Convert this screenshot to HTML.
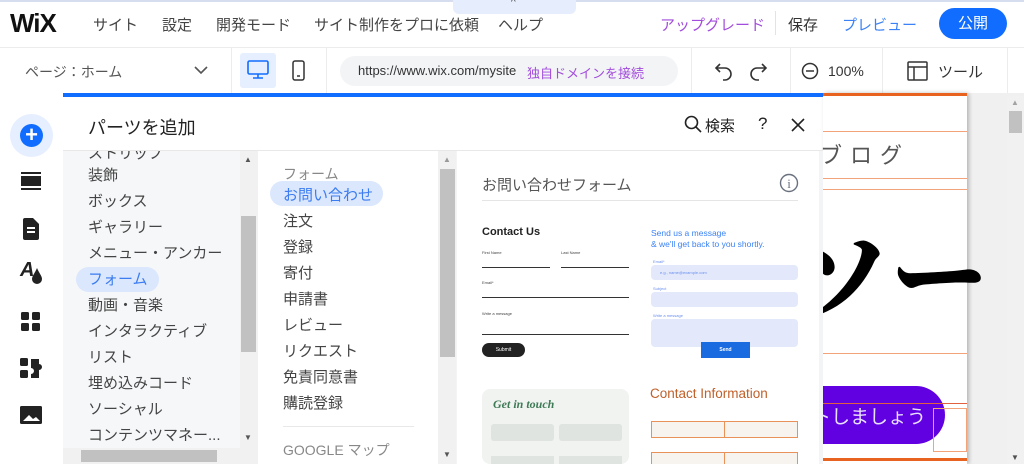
<!DOCTYPE html>
<html><head><meta charset="utf-8"><style>
*{box-sizing:border-box;margin:0;padding:0}
body{width:1024px;height:464px;overflow:hidden;position:relative;background:#fff;font-family:"Liberation Sans","Noto Sans CJK JP",sans-serif;color:#333}
.a{position:absolute}
.t{white-space:nowrap}
</style></head><body>
<!-- top bar -->
<div class="a" style="left:0;top:0;width:1024px;height:2px;background:#d6ddef"></div>
<div class="a" style="left:453px;top:0;width:123px;height:14px;background:#e6edfc;border-radius:0 0 6px 6px"></div>
<div class="a t" style="left:511px;top:-3px;font-size:10px;color:#333">^</div>
<div class="a t" style="left:10px;top:8px;font-size:26px;font-weight:900;color:#111;letter-spacing:-1px">WiX</div>
<div class="a t" style="left:93px;top:14px;font-size:15px;color:#444">サイト</div>
<div class="a t" style="left:162px;top:14px;font-size:15px;color:#444">設定</div>
<div class="a t" style="left:216px;top:14px;font-size:15px;color:#444">開発モード</div>
<div class="a t" style="left:314px;top:14px;font-size:15px;color:#444">サイト制作をプロに依頼</div>
<div class="a t" style="left:498px;top:14px;font-size:15px;color:#444">ヘルプ</div>
<div class="a t" style="left:660px;top:14px;font-size:15px;color:#a24ddb">アップグレード</div>
<div class="a" style="left:775px;top:11px;width:1px;height:24px;background:#e3e3e3"></div>
<div class="a t" style="left:788px;top:14px;font-size:15px;color:#333">保存</div>
<div class="a t" style="left:842px;top:14px;font-size:15px;color:#3b82f6">プレビュー</div>
<div class="a" style="left:939px;top:8px;width:68px;height:31px;background:#116dff;border-radius:16px;color:#fff;font-size:15px;text-align:center;line-height:31px">公開</div>
<div class="a" style="left:0;top:47px;width:1024px;height:1px;background:#ececec"></div>
<!-- second bar -->
<div class="a t" style="left:25px;top:62px;font-size:14px;color:#555">ページ：ホーム</div>
<svg class="a" style="left:194px;top:65px" width="14" height="10"><path d="M1 2l6 6 6-6" stroke="#555" stroke-width="1.6" fill="none"/></svg>
<div class="a" style="left:231px;top:48px;width:1px;height:45px;background:#ececec"></div>
<div class="a" style="left:240px;top:53px;width:36px;height:35px;background:#e6efff;border-radius:3px"></div>
<svg class="a" style="left:246px;top:60px" width="24" height="20"><rect x="2" y="1" width="20" height="13" rx="1.5" stroke="#116dff" stroke-width="1.6" fill="none"/><path d="M12 14v4M7 18h10" stroke="#116dff" stroke-width="1.6"/></svg>
<svg class="a" style="left:292px;top:60px" width="14" height="22"><rect x="1" y="1" width="11" height="19" rx="2" stroke="#333" stroke-width="1.5" fill="none"/><path d="M5 16h3" stroke="#333" stroke-width="1.5"/></svg>
<div class="a" style="left:326px;top:48px;width:1px;height:45px;background:#ececec"></div>
<div class="a" style="left:340px;top:56px;width:338px;height:30px;background:#f3f4f6;border-radius:15px"></div>
<div class="a t" style="left:358px;top:63px;font-size:13px;color:#333">https://www.wix.com/mysite</div>
<div class="a t" style="left:527px;top:63px;font-size:13px;color:#a24ddb">独自ドメインを接続</div>
<div class="a" style="left:691px;top:48px;width:1px;height:45px;background:#ececec"></div>
<svg class="a" style="left:714px;top:61px" width="20" height="20"><path d="M6 3L2 7l4 4M2 7h9a6 6 0 0 1 0 12H9" stroke="#333" stroke-width="1.6" fill="none"/></svg>
<svg class="a" style="left:748px;top:61px" width="20" height="20"><path d="M14 3l4 4-4 4M18 7H9a6 6 0 0 0 0 12h2" stroke="#333" stroke-width="1.6" fill="none"/></svg>
<div class="a" style="left:790px;top:48px;width:1px;height:45px;background:#ececec"></div>
<svg class="a" style="left:801px;top:62px" width="18" height="18"><circle cx="9" cy="9" r="7.5" stroke="#333" stroke-width="1.5" fill="none"/><path d="M5 9h8" stroke="#333" stroke-width="1.5"/></svg>
<div class="a t" style="left:828px;top:63px;font-size:14px;color:#333">100%</div>
<div class="a" style="left:882px;top:48px;width:1px;height:45px;background:#ececec"></div>
<svg class="a" style="left:907px;top:61px" width="22" height="20"><rect x="1" y="1" width="19" height="18" rx="1" stroke="#333" stroke-width="1.5" fill="none"/><path d="M1 6h19M7 6v13" stroke="#333" stroke-width="1.5"/></svg>
<div class="a t" style="left:938px;top:61px;font-size:15px;color:#333">ツール</div>
<div class="a" style="left:1007px;top:48px;width:1px;height:45px;background:#ececec"></div>
<!-- right gray & canvas -->
<div class="a" style="left:823px;top:93px;width:201px;height:371px;background:#f0f0f0"></div>
<div class="a" style="left:823px;top:93px;width:144px;height:371px;background:#fff;box-shadow:2px 0 4px rgba(0,0,0,.25)"></div>
<div class="a" style="left:823px;top:93px;width:144px;height:3px;background:#e86320"></div>
<div class="a" style="left:823px;top:131px;width:144px;height:1px;background:#f3a37a"></div>
<div class="a t" style="left:820px;top:138px;font-size:22px;color:#555;letter-spacing:8px">ブログ</div>
<div class="a" style="left:823px;top:178px;width:144px;height:1px;background:#f3a37a"></div>
<div class="a" style="left:823px;top:189px;width:144px;height:1px;background:#f3a37a"></div>
<div class="a t" style="left:795px;top:225px;font-size:96px;color:#000;font-family:'Noto Serif CJK SC',serif;font-weight:900;line-height:1">ソー</div>
<div class="a" style="left:823px;top:353px;width:144px;height:1px;background:#f3a37a"></div>
<div class="a" style="left:790px;top:386px;width:155px;height:58px;background:#6100e0;border-radius:0 29px 29px 0"></div>
<div class="a" style="left:790px;top:403px;width:177px;height:1px;background:#e06040"></div>
<div class="a t" style="left:812px;top:402px;font-size:19px;color:#e8e0ff">トしましょう</div>
<div class="a" style="left:933px;top:408px;width:34px;height:44px;border:1px solid #f3a37a"></div>
<div class="a" style="left:823px;top:458px;width:144px;height:3px;background:#e86320"></div>
<div class="a" style="left:1007px;top:96px;width:17px;height:368px;background:#f1f1f1"></div>
<div class="a" style="left:1009px;top:111px;width:13px;height:22px;background:#c1c1c1"></div>
<div class="a t" style="left:1011px;top:98px;font-size:8px;color:#a3a3a3">▲</div>
<div class="a t" style="left:1011px;top:453px;font-size:8px;color:#505050">▼</div>
<!-- left sidebar -->
<div class="a" style="left:0;top:93px;width:63px;height:371px;background:#fff"></div>
<div class="a" style="left:10px;top:114px;width:43px;height:43px;border-radius:50%;background:#e6efff"></div>
<div class="a" style="left:20px;top:124px;width:23px;height:23px;border-radius:50%;background:#116dff;color:#fff;font-size:22px;line-height:22px;text-align:center;font-weight:bold">+</div>
<svg class="a" style="left:20px;top:172px" width="22" height="18"><rect x="1" y="0" width="20" height="2" fill="#222"/><rect x="1" y="4" width="20" height="10" fill="#222"/><rect x="1" y="16" width="20" height="2" fill="#222"/></svg>
<svg class="a" style="left:22px;top:218px" width="18" height="22"><path d="M1 2a2 2 0 0 1 2-2h8l6 6v14a2 2 0 0 1-2 2H3a2 2 0 0 1-2-2z" fill="#222"/><path d="M5 10h8M5 14h8" stroke="#fff" stroke-width="2"/></svg>
<div class="a t" style="left:20px;top:259px;font-size:20px;font-weight:900;color:#222;font-style:italic">A</div>
<svg class="a" style="left:31px;top:268px" width="12" height="16"><path d="M6 0C4 5 1 8 1 11a5 5 0 0 0 10 0C11 8 8 5 6 0z" fill="#222"/></svg>
<svg class="a" style="left:21px;top:312px" width="20" height="20"><rect x="0" y="0" width="8" height="8" rx="1.5" fill="#222"/><rect x="11" y="0" width="8" height="8" rx="1.5" fill="#222"/><rect x="0" y="11" width="8" height="8" rx="1.5" fill="#222"/><rect x="11" y="11" width="8" height="8" rx="1.5" fill="#222"/></svg>
<svg class="a" style="left:20px;top:358px" width="24" height="22"><rect x="0" y="0" width="8" height="8" rx="1.5" fill="#222"/><rect x="0" y="12" width="8" height="8" rx="1.5" fill="#222"/><path d="M11 1h8v5a3 3 0 1 1 0 6v8h-8v-4a3 3 0 1 0 0-6z" fill="#222"/></svg>
<svg class="a" style="left:20px;top:406px" width="22" height="18"><rect x="0" y="0" width="22" height="18" rx="1.5" fill="#222"/><path d="M3 15l6-6 4 4 3-2 4 4z" fill="#fff"/></svg>
<!-- panel -->
<div class="a" style="left:63px;top:93px;width:760px;height:4px;background:#116dff"></div>
<div class="a t" style="left:88px;top:114px;font-size:18px;color:#222">パーツを追加</div>
<svg class="a" style="left:684px;top:115px" width="18" height="18"><circle cx="7.5" cy="7.5" r="6" stroke="#222" stroke-width="1.6" fill="none"/><path d="M12 12l5 5" stroke="#222" stroke-width="1.6"/></svg>
<div class="a t" style="left:705px;top:115px;font-size:15px;color:#222">検索</div>
<div class="a t" style="left:758px;top:114px;font-size:17px;color:#222">?</div>
<svg class="a" style="left:791px;top:118px" width="14" height="14"><path d="M1 1l12 12M13 1L1 13" stroke="#222" stroke-width="1.6"/></svg>
<div class="a" style="left:63px;top:150px;width:760px;height:1px;background:#e8e8e8"></div>
<!-- left column -->
<div class="a" style="left:63px;top:151px;width:195px;height:313px;background:#f6f7f9;overflow:hidden">
 <div class="a t" style="left:25px;top:-9px;font-size:15px;color:#444">ストリップ</div>
</div>
<div class="a" style="left:76px;top:267px;width:83px;height:25px;border-radius:13px;background:#dbe7fd"></div>
<div class="a" style="left:88px;top:163px;font-size:15px;color:#444;line-height:26px">装飾<br>ボックス<br>ギャラリー<br>メニュー・アンカー<br><span style="color:#3b7cf0">フォーム</span><br>動画・音楽<br>インタラクティブ<br>リスト<br>埋め込みコード<br>ソーシャル<br>コンテンツマネー...</div>
<div class="a" style="left:240px;top:151px;width:18px;height:300px;background:#f1f1f1"></div>
<div class="a" style="left:241px;top:216px;width:15px;height:136px;background:#c1c1c1"></div>
<div class="a t" style="left:244px;top:155px;font-size:8px;color:#555">▲</div>
<div class="a t" style="left:244px;top:433px;font-size:8px;color:#555">▼</div>
<div class="a" style="left:63px;top:448px;width:195px;height:16px;background:#f1f1f1"></div>
<div class="a" style="left:81px;top:450px;width:136px;height:12px;background:#c1c1c1"></div>
<!-- middle column -->
<div class="a" style="left:258px;top:151px;width:198px;height:313px;background:#fff"></div>
<div class="a t" style="left:283px;top:164px;font-size:14px;color:#888">フォーム</div>
<div class="a" style="left:270px;top:181px;width:113px;height:25px;border-radius:13px;background:#dbe7fd"></div>
<div class="a" style="left:283px;top:183px;font-size:15px;color:#444;line-height:26px"><span style="color:#3b7cf0">お問い合わせ</span><br>注文<br>登録<br>寄付<br>申請書<br>レビュー<br>リクエスト<br>免責同意書<br>購読登録</div>
<div class="a" style="left:283px;top:426px;width:131px;height:1px;background:#e8e8e8"></div>
<div class="a t" style="left:283px;top:440px;font-size:14px;color:#888">GOOGLE マップ</div>
<div class="a" style="left:438px;top:151px;width:18px;height:313px;background:#f1f1f1"></div>
<div class="a" style="left:440px;top:169px;width:15px;height:188px;background:#c1c1c1"></div>
<div class="a t" style="left:443px;top:155px;font-size:8px;color:#999">▲</div>
<div class="a t" style="left:443px;top:450px;font-size:8px;color:#555">▼</div>
<!-- right preview -->
<div class="a" style="left:456px;top:151px;width:367px;height:313px;background:#f3f4f6"></div>
<div class="a" style="left:457px;top:151px;width:362px;height:313px;background:#fff"></div>
<div class="a t" style="left:482px;top:174px;font-size:15px;color:#555">お問い合わせフォーム</div>
<svg class="a" style="left:779px;top:173px" width="20" height="20"><circle cx="10" cy="10" r="8.5" stroke="#6a7280" stroke-width="1.4" fill="none"/><text x="10" y="15" font-size="13" text-anchor="middle" fill="#6a7280" font-family="Liberation Serif">i</text></svg>
<div class="a" style="left:482px;top:200px;width:316px;height:1px;background:#e5e5e5"></div>
<div class="a t" style="left:482px;top:226px;font-size:11px;font-weight:bold;color:#222">Contact Us</div>
<div class="a t" style="left:482px;top:250px;font-size:4px;color:#444">First Name</div>
<div class="a t" style="left:561px;top:250px;font-size:4px;color:#444">Last Name</div>
<div class="a" style="left:482px;top:267px;width:68px;height:1px;background:#333"></div>
<div class="a" style="left:561px;top:267px;width:68px;height:1px;background:#333"></div>
<div class="a t" style="left:482px;top:280px;font-size:4px;color:#444">Email*</div>
<div class="a" style="left:482px;top:297px;width:147px;height:1px;background:#333"></div>
<div class="a t" style="left:482px;top:311px;font-size:4px;color:#444">Write a message</div>
<div class="a" style="left:482px;top:334px;width:147px;height:1px;background:#333"></div>
<div class="a" style="left:482px;top:343px;width:43px;height:14px;border-radius:7px;background:#222;color:#fff;font-size:5px;text-align:center;line-height:14px">Submit</div>
<div class="a" style="left:651px;top:228px;font-size:8.5px;color:#3b82f6;line-height:11px">Send us a message<br>&amp; we'll get back to you shortly.</div>
<div class="a t" style="left:653px;top:259px;font-size:4px;color:#6b8ff0">Email*</div>
<div class="a" style="left:651px;top:265px;width:147px;height:15px;border-radius:4px;background:#e3e9fb"></div>
<div class="a t" style="left:660px;top:270px;font-size:4px;color:#6b8ff0">e.g., name@example.com</div>
<div class="a t" style="left:653px;top:286px;font-size:4px;color:#6b8ff0">Subject</div>
<div class="a" style="left:651px;top:292px;width:147px;height:15px;border-radius:4px;background:#e3e9fb"></div>
<div class="a t" style="left:653px;top:313px;font-size:4px;color:#6b8ff0">Write a message</div>
<div class="a" style="left:651px;top:319px;width:147px;height:28px;border-radius:4px;background:#e3e9fb"></div>
<div class="a" style="left:701px;top:342px;width:49px;height:16px;background:#1a6ae0;color:#fff;font-size:5px;text-align:center;line-height:16px;font-weight:bold">Send</div>
<div class="a" style="left:482px;top:389px;width:147px;height:75px;border-radius:8px;background:#f1f3f1"></div>
<div class="a t" style="left:493px;top:397px;font-size:12px;font-style:italic;font-weight:bold;color:#3d7a55;font-family:'Liberation Serif',serif">Get in touch</div>
<div class="a" style="left:491px;top:424px;width:63px;height:17px;border-radius:3px;background:#dfe4e0"></div>
<div class="a" style="left:559px;top:424px;width:63px;height:17px;border-radius:3px;background:#dfe4e0"></div>
<div class="a" style="left:491px;top:456px;width:63px;height:8px;background:#dfe4e0"></div>
<div class="a" style="left:559px;top:456px;width:63px;height:8px;background:#dfe4e0"></div>
<div class="a t" style="left:650px;top:386px;font-size:13.5px;color:#c0602a">Contact Information</div>
<div class="a" style="left:651px;top:421px;width:147px;height:17px;border:1px solid #e8925a;background:#f7f4f0"></div>
<div class="a" style="left:724px;top:421px;width:1px;height:17px;background:#e8925a"></div>
<div class="a" style="left:651px;top:452px;width:147px;height:12px;border:1px solid #e8925a;border-bottom:none;background:#f7f4f0"></div>
<div class="a" style="left:724px;top:452px;width:1px;height:12px;background:#e8925a"></div>
</body></html>
